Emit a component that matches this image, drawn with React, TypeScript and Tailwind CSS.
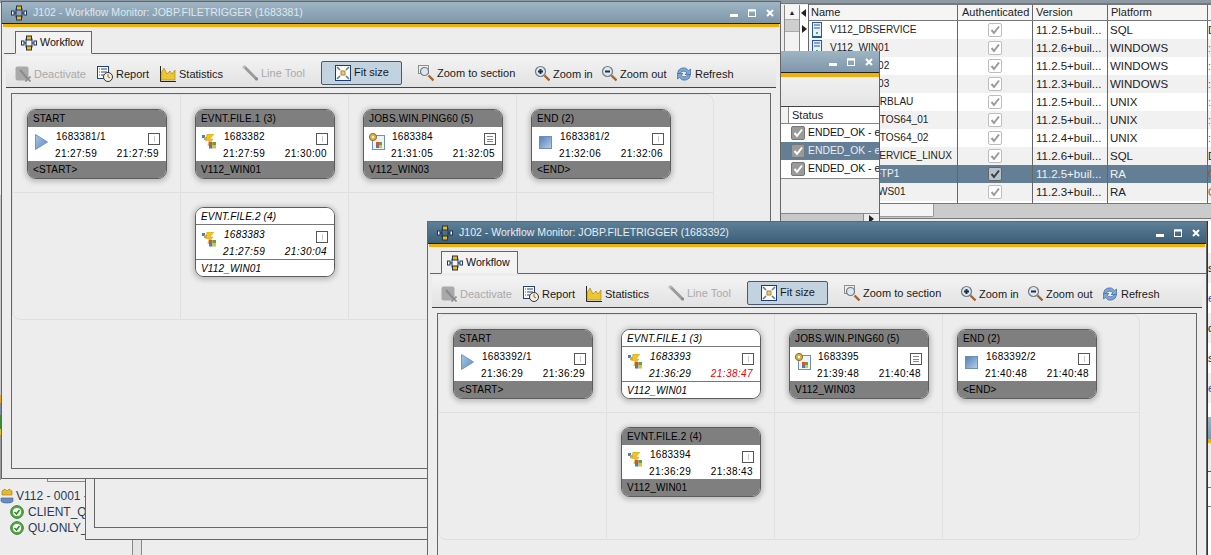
import React from "react";

function WfIcon() {
  return (
    <svg width="16" height="16" viewBox="0 0 16 16" className="shrink-0">
      <rect x="0.5" y="6" width="2.5" height="4" fill="#fff" stroke="#1d3557" />
      <path d="M3 8h2M11 8h2M5 3.5v9M11 3.5v9M5 3.5h1M10 3.5h1M5 12.5h1M10 12.5h1" stroke="#1d3557" fill="none" />
      <rect x="5.5" y="1" width="5" height="4" fill="#f2b705" stroke="#1d3557" />
      <rect x="5.5" y="11" width="5" height="4" fill="#f2b705" stroke="#1d3557" />
      <rect x="13" y="6" width="2.5" height="4" fill="#fff" stroke="#1d3557" />
    </svg>
  );
}

function WinButtons() {
  return (
    <div className="flex items-center gap-[10px]">
      <svg width="8" height="8" viewBox="0 0 8 8"><rect y="5" width="8" height="3" fill="#fff" /></svg>
      <svg width="8" height="8" viewBox="0 0 8 8"><rect x="0.5" y="1" width="7" height="6.5" fill="none" stroke="#fff" /><rect x="0" y="0.5" width="8" height="2" fill="#fff" /></svg>
      <svg width="8" height="8" viewBox="0 0 8 8"><path d="M1 1l6 6M7 1l-6 6" stroke="#fff" strokeWidth="2" /></svg>
    </div>
  );
}

const Mag = ({ sign }: { sign: "+" | "-" | "" }) => (
  <svg width="16" height="17" viewBox="0 0 16 17" className="shrink-0">
    {sign === "" && <rect x="0.5" y="0.5" width="10" height="8" fill="none" stroke="#333" strokeDasharray="1 1" />}
    <circle cx="6.5" cy="6.5" r={sign === "" ? 4 : 5} fill="#dfe7ee" stroke="#6e7b86" strokeWidth="1.2" />
    <path d="M10.5 10.5l5 5" stroke="#a5642a" strokeWidth="2.4" />
    {sign !== "" && <path d="M4 6.5h5" stroke="#1d2f45" strokeWidth="2" />}
    {sign === "+" && <path d="M6.5 4v5" stroke="#1d2f45" strokeWidth="2" />}
  </svg>
);

const IconDeactivate = () => (
  <svg width="16" height="16" viewBox="0 0 16 16" className="shrink-0">
    <rect x="0.5" y="0.5" width="13" height="14" rx="2" fill="#a9a9a9" />
    <path d="M5 4l7 8" stroke="#8a8a8a" strokeWidth="2" />
    <path d="M10.5 10.5l5 5M15.5 10.5l-5 5" stroke="#8c8c8c" strokeWidth="1.6" />
  </svg>
);
const IconReport = () => (
  <svg width="16" height="16" viewBox="0 0 16 16" className="shrink-0">
    <rect x="0.5" y="0.5" width="11" height="12" fill="#fff" stroke="#23407a" />
    <path d="M2 3h1M2 6h1M2 9h1" stroke="#c33" />
    <path d="M4 3h6M4 6h6M4 9h3" stroke="#23407a" />
    <circle cx="11" cy="11" r="4.5" fill="#f4efe0" stroke="#333" />
    <path d="M11 8v3l2 1" stroke="#a5642a" fill="none" />
  </svg>
);
const IconStats = () => (
  <svg width="16" height="16" viewBox="0 0 16 16" className="shrink-0">
    <path d="M0.5 0v15.5H16" fill="none" stroke="#222" />
    <path d="M1 7l3-5 3 6 3-3 2 3 3-4v10H1z" fill="#eec72f" stroke="#8a6c10" strokeWidth="0.5" />
  </svg>
);
const IconLine = () => (
  <svg width="16" height="16" viewBox="0 0 16 16" className="shrink-0">
    <path d="M2 1.5l12.5 12.5" stroke="#9a9a9a" strokeWidth="3" />
    <circle cx="2" cy="2" r="1.6" fill="#bcbcbc" />
    <circle cx="14.5" cy="14" r="1.6" fill="#8a8a8a" />
  </svg>
);
const IconFit = () => (
  <svg width="16" height="16" viewBox="0 0 16 16" className="shrink-0">
    <rect x="0.5" y="0.5" width="15" height="15" fill="#fff" stroke="#1d3a6e" />
    <rect x="6" y="6" width="4" height="4" fill="#e9c77a" stroke="#a8873c" />
    <path d="M2 2l3 3M14 2l-3 3M2 14l3-3M14 14l-3-3" stroke="#5f7a92" strokeWidth="1.6" />
  </svg>
);
const IconRefresh = () => (
  <svg width="16" height="16" viewBox="0 0 16 16" className="shrink-0">
    <path d="M1.5 7.5a6 6 0 0 1 11-3l2-1.5v5.5H9l2-1.5a4 4 0 0 0-7 .5z" fill="#7fa7d3" stroke="#3c6aa0" strokeWidth="0.7" />
    <path d="M14.5 8.5a6 6 0 0 1-11 3L1.5 13V7.5H7L5 9a4 4 0 0 0 7-.5z" fill="#7fa7d3" stroke="#3c6aa0" strokeWidth="0.7" />
  </svg>
);

function Tool({ icon, label, off, className }: { icon: React.ReactNode; label: string; off?: boolean; className: string }) {
  return (
    <div className={`flex items-center gap-[3px] shrink-0 ${className}`}>
      {icon}
      <span className={`text-[11px] leading-[14px] whitespace-nowrap ${off ? "text-[#a9a9a9]" : "text-[#1a1a1a]"}`}>{label}</span>
    </div>
  );
}

function Toolbar() {
  return (
    <div className="h-[32px] ml-[4px] mr-[4px] bg-gradient-to-b from-[#f3f3f3] to-[#e2e2e2] border-b border-[#444] flex items-center pl-[9px] pt-[3px] shrink-0">
      <Tool className="w-[82px] mt-[1px]" icon={<IconDeactivate />} label="Deactivate" off />
      <Tool className="w-[63px] mt-[1px]" icon={<IconReport />} label="Report" />
      <Tool className="w-[82px] mt-[1px]" icon={<IconStats />} label="Statistics" />
      <Tool className="w-[79px]" icon={<IconLine />} label="Line Tool" off />
      <div className="w-[81px] h-[24px] mr-[16px] -mt-[1px] rounded-[2px] border border-[#4a5a68] bg-[#c3d2df] flex items-center pl-[13px] gap-[3px] shrink-0">
        <IconFit />
        <span className="text-[11px] text-[#1a1a1a]">Fit size</span>
      </div>
      <Tool className="w-[116px]" icon={<Mag sign="" />} label="Zoom to section" />
      <Tool className="w-[67px] mt-[1px]" icon={<Mag sign="+" />} label="Zoom in" />
      <Tool className="w-[75px] mt-[1px]" icon={<Mag sign="-" />} label="Zoom out" />
      <Tool className="w-[64px] mt-[1px]" icon={<IconRefresh />} label="Refresh" />
    </div>
  );
}

const IconTrigger = () => (
  <svg width="14" height="15" viewBox="0 0 14 15" className="absolute left-[6px] top-[7px]">
    <path d="M5 0h7L8 5h3l-5 7 1-5.5H3.5z" fill="#f0c419" stroke="#b88d10" strokeWidth="0.4" />
    <rect x="0" y="1" width="3" height="3" fill="#3f7fc4" />
    <rect x="2" y="3" width="3" height="3" fill="#e8a030" />
    <rect x="7" y="8" width="3.5" height="3" fill="#d84f3a" />
    <rect x="10.5" y="8" width="3.5" height="3" fill="#58a83c" />
    <rect x="7" y="11" width="3.5" height="3.5" fill="#3f7fc4" />
    <rect x="10.5" y="11" width="3.5" height="3.5" fill="#e8c020" />
  </svg>
);
const IconJob = () => (
  <svg width="16" height="17" viewBox="0 0 16 17" className="absolute left-[5px] top-[6px]">
    <rect x="3.5" y="2.5" width="12" height="14" fill="#eef3fa" stroke="#6f8fb5" />
    <circle cx="4" cy="4" r="3.6" fill="#d9b04a" stroke="#8d7022" />
    <circle cx="4" cy="4" r="1.2" fill="#fff" />
    <rect x="7" y="9" width="3" height="3" fill="#d84f3a" />
    <rect x="10" y="9" width="3" height="3" fill="#58a83c" />
    <rect x="7" y="12" width="3" height="3" fill="#3f7fc4" />
    <rect x="10" y="12" width="3" height="3" fill="#e8c020" />
  </svg>
);
const IconStart = () => (
  <svg width="13" height="16" viewBox="0 0 13 16" className="absolute left-[7px] top-[7px]">
    <defs><linearGradient id="st" x1="0" y1="0" x2="1" y2="1"><stop offset="0" stopColor="#a9c6e8" /><stop offset="1" stopColor="#5f8cc0" /></linearGradient></defs>
    <path d="M0.5 0.5L12.5 8 0.5 15.5z" fill="url(#st)" stroke="#7395bf" />
  </svg>
);
const IconEnd = () => (
  <svg width="13" height="13" viewBox="0 0 13 13" className="absolute left-[7px] top-[9px]">
    <defs><linearGradient id="en" x1="0" y1="0" x2="1" y2="1"><stop offset="0" stopColor="#4f7fb8" /><stop offset="1" stopColor="#b9cfe8" /></linearGradient></defs>
    <rect x="0.5" y="0.5" width="12" height="12" fill="url(#en)" stroke="#6f8fb5" />
  </svg>
);

function Flag({ lines }: { lines?: boolean }) {
  return (
    <div className="absolute right-[6px] top-[6px] w-[12px] h-[12px] border border-[#555] bg-white flex items-center justify-center">
      {lines ? (
        <div className="w-[6px] h-[6px] flex flex-col justify-between">
          <div className="h-[1px] bg-[#888]" />
          <div className="h-[1px] bg-[#888]" />
          <div className="h-[1px] bg-[#888]" />
        </div>
      ) : (
        <div className="w-[1px] h-[6px] bg-[#ccc]" />
      )}
    </div>
  );
}

type NodeP = { title: string; id: string; t1: string; t2: string; foot: string; icon: React.ReactNode; white?: boolean; lines?: boolean; red?: boolean };

function Node({ title, id, t1, t2, foot, icon, white, lines, red }: NodeP) {
  const bar = white ? "bg-white" : "bg-[#7f7f7f]";
  const txt = `${white ? "italic" : ""} text-[10px] text-black`;
  return (
    <div className="w-[140px] h-[70px] rounded-[9px] border border-[#5c5c5c] overflow-hidden bg-white shadow-[0_1px_5px_2px_rgba(0,0,0,0.2)] flex flex-col">
      <div className={`h-[17px] ${bar} ${white ? "border-b border-[#777]" : ""} pl-[5px] ${txt} leading-[18px] tracking-[0.15px] whitespace-nowrap shrink-0`}>{title}</div>
      <div className={`relative h-[34px] bg-white ${txt} shrink-0`}>
        {icon}
        <div className="absolute left-[28px] top-[4px] leading-[12px] tracking-[0.28px]">{id}</div>
        <div className="absolute left-[27px] top-[21px] leading-[12px] tracking-[0.4px]">{t1}</div>
        <div className={`absolute right-[7px] top-[21px] leading-[12px] tracking-[0.4px] ${red ? "text-[#e8000d]" : ""}`}>{t2}</div>
        <Flag lines={lines} />
      </div>
      <div className={`flex-1 ${bar} ${white ? "border-t border-[#777]" : ""} pl-[5px] ${txt} leading-[18px] tracking-[0.15px] whitespace-nowrap`}>{foot}</div>
    </div>
  );
}

function Grid({ top, second }: { top: NodeP[]; second: NodeP }) {
  return (
    <div className="w-[702px] h-[226px] bg-[#ededed] border border-[#e0e0e0] rounded-[8px] flex flex-col overflow-hidden">
      <div className="flex h-[98px] border-b border-[#e0e0e0] shrink-0">
        {top.map((n, i) => (
          <div key={i} className={`pl-[14px] pt-[14px] ${i < 3 ? "w-[168px] border-r border-[#e0e0e0]" : "flex-1"}`}><Node {...n} /></div>
        ))}
      </div>
      <div className="flex flex-1">
        <div className="w-[168px] border-r border-[#e0e0e0]" />
        <div className="w-[168px] pl-[14px] pt-[14px] border-r border-[#e0e0e0]"><Node {...second} /></div>
        <div className="w-[168px] border-r border-[#e0e0e0]" />
        <div className="flex-1" />
      </div>
    </div>
  );
}

function Win({ place, title, active, top, second }: { place: string; title: string; active?: boolean; top: NodeP[]; second: NodeP }) {
  return (
    <div className={`absolute w-[780px] border border-[#666] bg-[#ededed] flex flex-col ${place}`}>
      <div className={`h-[22px] shrink-0 flex items-center justify-between pl-[9px] pr-[6px] border-b border-[#222] ${active ? "bg-gradient-to-b from-[#5d7f98] to-[#3d5f78]" : "bg-gradient-to-b from-[#9fb5c4] to-[#7e97aa]"}`}>
        <div className="flex items-center gap-[6px]">
          <WfIcon />
          <span className={`text-[10.55px] ${active ? "text-[#e4edf3]" : "text-[#dfe7ee]"}`}>{title}</span>
        </div>
        <WinButtons />
      </div>
      <div className="h-[3px] bg-[#f2ae0b] ml-[1px] mr-[1px] shrink-0" />
      <div className="h-[27px] pl-[11px] flex items-end border-b border-[#666] ml-[2px] shrink-0">
        <div className="h-[23px] w-[77px] -mb-[1px] border border-[#666] border-b-[#ededed] bg-[#f3f3f3] flex items-center gap-[3px] pl-[5px]">
          <WfIcon />
          <span className="text-[10.7px] text-[#111]">Workflow</span>
        </div>
      </div>
      <div className="h-[2px] shrink-0" />
      <Toolbar />
      <div className="flex-1 mx-[9px] mt-[5px] mb-[9px] border border-[#666] overflow-hidden min-h-0">
        <Grid top={top} second={second} />
      </div>
    </div>
  );
}

const rows = [
  ["V112_DBSERVICE", "11.2.5+buil...", "SQL", "D"],
  ["V112_WIN01", "11.2.6+buil...", "WINDOWS", ":"],
  ["V112_WIN02", "11.2.5+buil...", "WINDOWS", ":"],
  ["V112_WIN03", "11.2.3+buil...", "WINDOWS", ":"],
  ["V112_ROTRBLAU", "11.2.5+buil...", "UNIX", ":"],
  ["V112_CENTOS64_01", "11.2.5+buil...", "UNIX", ":"],
  ["V112_CENTOS64_02", "11.2.4+buil...", "UNIX", ":"],
  ["V112_DBSERVICE_LINUX", "11.2.6+buil...", "SQL", "D"],
  ["V112_WSFTP1", "11.2.5+buil...", "RA", "C"],
  ["V112_RA_WS01", "11.2.3+buil...", "RA", "C"],
];

function Check({ sel }: { sel?: boolean }) {
  return (
    <div className={`w-[14px] h-[14px] rounded-[2px] border flex items-center justify-center ${sel ? "bg-[#b8c2cb] border-[#666]" : "bg-white border-[#bdbdbd]"}`}>
      <svg width="10" height="10" viewBox="0 0 10 10"><path d="M1.5 5l2.5 3L9 1.5" fill="none" stroke={sel ? "#33414d" : "#9a9a9a"} strokeWidth="2" /></svg>
    </div>
  );
}

function DarkCheck() {
  return (
    <div className="w-[14px] h-[14px] rounded-[2px] border bg-[#9a9a9a] border-[#777] flex items-center justify-center shrink-0">
      <svg width="10" height="10" viewBox="0 0 10 10"><path d="M1.5 5l2.5 3L9 1.5" fill="none" stroke="#fff" strokeWidth="2" /></svg>
    </div>
  );
}

function AgentTable() {
  return (
    <div className="absolute left-[781px] top-[3px] w-[430px] h-[216px] bg-[#ededed] border-t border-[#777] text-[11px] text-[#222]">
      <div className="absolute left-[3px] top-[1px] w-[16px] h-[70px] border-x border-[#888]">
        <div className="h-[15px] border-b border-[#aaa] text-center text-[7px] leading-[15px] bg-[#f5f5f5]">▲</div>
        <div className="h-[12px] border-b border-[#aaa] bg-[#cfcfcf]" />
        <div className="h-[40px] bg-[#f2f2f2]" />
      </div>
      <div className="absolute left-[19px] top-[1px] w-[8px] h-[200px] bg-white">
        <div className="absolute left-[1px] top-[4px] w-0 h-0 border-y-[4px] border-y-transparent border-r-[5px] border-r-[#222]" />
        <div className="absolute left-[2px] top-[20px] w-0 h-0 border-y-[4px] border-y-transparent border-l-[5px] border-l-[#222]" />
      </div>
      <div className="absolute left-[27px] top-0 w-[403px] border-l border-[#666] overflow-hidden">
        <div className="flex h-[17px] bg-[#f5f5f5] border-y border-[#777] leading-[15px]">
          <div className="w-[149px] shrink-0 pl-[2px] border-r border-[#666]">Name</div>
          <div className="w-[75px] shrink-0 pl-[4px] border-r border-[#666]">Authenticated</div>
          <div className="w-[75px] shrink-0 pl-[3px] border-r border-[#666]">Version</div>
          <div className="w-[100px] shrink-0 pl-[3px] border-r border-[#666]">Platform</div>
        </div>
        {rows.map((r, i) => {
          const sel = i === 8;
          return (
            <div key={i} className={`flex h-[18px] items-center leading-[18px] ${sel ? "bg-[#647e96] text-[#eef3f7]" : i % 2 ? "bg-[#f1f1f1]" : "bg-white"}`}>
              <div className="w-[149px] shrink-0 pl-[3px] border-r border-[#666] h-full flex items-center gap-[8px] whitespace-nowrap overflow-hidden text-[10.1px]">
                <svg width="10" height="16" viewBox="0 0 10 16" className="shrink-0"><rect x="0.5" y="0.5" width="9" height="14" fill="#e8f0fa" stroke="#2d55a5" /><path d="M2 3h6M2 6h6" stroke="#2d55a5" /><rect x="4" y="10" width="2" height="2" fill="#4caf50" /><path d="M0 15.5h10" stroke="#2d55a5" /></svg>
                <span>{r[0]}</span>
              </div>
              <div className="w-[75px] shrink-0 border-r border-[#666] h-full flex items-center justify-center"><Check sel={sel} /></div>
              <div className="w-[75px] shrink-0 pl-[3px] border-r border-[#666] h-full text-[11.5px]">{r[1]}</div>
              <div className="w-[100px] shrink-0 pl-[2px] border-r border-[#666] h-full text-[11.5px]">{r[2]}</div>
              <div className={`w-[4px] overflow-hidden text-[11px] ${i === 0 || i === 7 ? "text-[#222]" : "text-[#c0501c]"}`}>{r[3]}</div>
            </div>
          );
        })}
        <div className="flex h-[2px] bg-white">
          <div className="w-[149px] border-r border-[#666]" />
          <div className="w-[75px] border-r border-[#666]" />
          <div className="w-[75px] border-r border-[#666]" />
          <div className="w-[100px] border-r border-[#666]" />
        </div>
      </div>
      <div className="absolute left-[27px] top-[199px] w-[403px] h-[16px] bg-[#cbcbcb] border-y border-[#777]">
        <div className="ml-[72px] w-[54px] h-[13px] bg-[#f4f4f4] rounded-br-[2px] border-r border-b border-[#999]" />
      </div>
    </div>
  );
}

function StatusDialog() {
  return (
    <div className="absolute left-[775px] top-[51px] w-[105px] h-[170px] border-r border-[#666] bg-[#ededed] flex flex-col">
      <div className="h-[22px] shrink-0 bg-gradient-to-b from-[#9fb5c4] to-[#7e97aa] border-b border-[#222] flex items-center justify-end pr-[6px]">
        <WinButtons />
      </div>
      <div className="h-[4px] shrink-0 bg-[#f2ae0b]" />
      <div className="h-[30px] shrink-0 border-b border-[#444] bg-gradient-to-b from-[#f1f1f1] to-[#e4e4e4]" />
      <div className="flex h-[17px] shrink-0 bg-white border-b border-[#888]">
        <div className="w-[14px] border-r border-[#888] bg-[#f2f2f2]" />
        <div className="pl-[3px] text-[11px] text-[#222] leading-[16px]">Status</div>
      </div>
      {[0, 1, 2].map((i) => (
        <div key={i} className={`h-[18px] shrink-0 flex items-center whitespace-nowrap overflow-hidden pl-[16px] ${i === 1 ? "bg-[#647e96] text-[#e8eef3]" : "bg-white text-[#111]"} text-[10.4px]`}>
          <DarkCheck />
          <span className="ml-[3px]">ENDED_OK - e</span>
        </div>
      ))}
      <div className="h-[1px] shrink-0 bg-[#888]" />
      <div className="flex-1" />
      <div className="h-[8px] shrink-0 bg-[#c8c8c8] border-t border-[#888] flex justify-end">
        <div className="w-[16px] h-full bg-[#ededed] border-l border-[#888] relative">
          <div className="absolute left-[5px] top-[1px] w-0 h-0 border-y-[4px] border-y-transparent border-l-[5px] border-l-[#222]" />
        </div>
      </div>
    </div>
  );
}

function Background() {
  return (
    <>
      <div className="absolute left-0 top-0 w-full h-[3px] bg-[#8d9aa3]" />
      <div className="absolute left-0 top-[195px] w-[1px] h-[285px] flex flex-col">
        <div className="h-[200px] bg-[#c9c9c9]" />
        <div className="h-[8px] bg-[#e8a52a]" />
        <div className="h-[12px] bg-[#7d8da0]" />
        <div className="h-[14px] bg-[#3d8a3d]" />
        <div className="h-[6px] bg-[#e8c020]" />
        <div className="flex-1 bg-[#999]" />
      </div>
      <div className="absolute left-0 top-[488px] text-[12px] leading-[16px] text-[#2a3a55]">
        <div className="flex items-center gap-[2px] h-[16px]">
          <svg width="14" height="16" viewBox="0 0 14 16"><path d="M1 13a6 2 0 0 0 12 0v-3H1z" fill="#6c8cc0" stroke="#3f5a8f" strokeWidth="0.6" /><path d="M2 3l3-2 2 2 2-2 3 2v4H2z" fill="#e8b92c" stroke="#9a7713" strokeWidth="0.6" /></svg>
          <span>V112 - 0001 -</span>
        </div>
        {["CLIENT_QU", "QU.ONLY_1"].map((t) => (
          <div key={t} className="flex items-center gap-[4px] pl-[10px] h-[16px]">
            <svg width="14" height="14" viewBox="0 0 14 14"><circle cx="7" cy="7" r="6.3" fill="#58ad45" stroke="#2f7a2a" /><circle cx="7" cy="7" r="4" fill="#fff" /><path d="M4.5 7l2 2 3-4" stroke="#2f8a2a" strokeWidth="1.6" fill="none" /></svg>
            <span>{t}</span>
          </div>
        ))}
      </div>
      <div className="absolute left-[47px] top-[470px] w-[40px] h-[12px] border-b border-l border-[#888]" />
      <div className="absolute left-[85px] top-[400px] w-[400px] h-[140px] border border-[#666] bg-[#ededed]">
        <div className="absolute left-[8px] right-0 bottom-[11px] h-[80px] border-b border-l border-[#666]" />
      </div>
      <div className="absolute left-[132px] top-[540px] w-[10px] h-[15px] border-x border-[#888] bg-[#e4e4e4]" />
      <div className="absolute left-[1207px] top-[221px] w-[4px] h-[334px] bg-white border-l border-[#333] text-[11px] leading-[30px] overflow-hidden">
        {[["s", "text-[#222]"], ["e", "text-[#1a3ccf]"], ["d", "text-[#222]"], ["s", "text-[#222]"], ["e", "text-[#1a3ccf]"]].map(([c, k], i) => (
          <div key={i} className={`h-[30px] ${i === 0 ? "mt-[32px]" : ""} ${i % 2 ? "bg-white" : "bg-[#efefef]"} ${k}`}>{c}</div>
        ))}
        <div className="mt-[14px] h-[22px] bg-gradient-to-b from-[#9fb5c4] to-[#7e97aa]" />
        <div className="h-[4px] bg-[#f2ae0b]" />
        <div className="h-[29px] bg-[#ededed] border-b border-[#555]" />
        <div className="h-[16px] bg-[#f5f5f5] border-b border-[#777]" />
        <div className="h-[19px] bg-white border-b border-[#777]" />
      </div>
    </>
  );
}

export default function App() {
  const w1: NodeP[] = [
    { title: "START", id: "1683381/1", t1: "21:27:59", t2: "21:27:59", foot: "<START>", icon: <IconStart /> },
    { title: "EVNT.FILE.1 (3)", id: "1683382", t1: "21:27:59", t2: "21:30:00", foot: "V112_WIN01", icon: <IconTrigger /> },
    { title: "JOBS.WIN.PING60 (5)", id: "1683384", t1: "21:31:05", t2: "21:32:05", foot: "V112_WIN03", icon: <IconJob />, lines: true },
    { title: "END (2)", id: "1683381/2", t1: "21:32:06", t2: "21:32:06", foot: "<END>", icon: <IconEnd /> },
  ];
  const w2: NodeP[] = [
    { title: "START", id: "1683392/1", t1: "21:36:29", t2: "21:36:29", foot: "<START>", icon: <IconStart /> },
    { title: "EVNT.FILE.1 (3)", id: "1683393", t1: "21:36:29", t2: "21:38:47", foot: "V112_WIN01", icon: <IconTrigger />, white: true, red: true },
    { title: "JOBS.WIN.PING60 (5)", id: "1683395", t1: "21:39:48", t2: "21:40:48", foot: "V112_WIN03", icon: <IconJob />, lines: true },
    { title: "END (2)", id: "1683392/2", t1: "21:40:48", t2: "21:40:48", foot: "<END>", icon: <IconEnd /> },
  ];
  return (
    <div className="relative w-[1211px] h-[555px] overflow-hidden bg-[#ededed] font-['Liberation_Sans',Arial,sans-serif]">
      <Background />
      <AgentTable />
      <StatusDialog />
      <Win place="left-[1px] top-[1px] h-[478px]" title="J102 - Workflow Monitor: JOBP.FILETRIGGER (1683381)" top={w1}
        second={{ title: "EVNT.FILE.2 (4)", id: "1683383", t1: "21:27:59", t2: "21:30:04", foot: "V112_WIN01", icon: <IconTrigger />, white: true }} />
      <Win active place="left-[427px] top-[221px] h-[400px]" title="J102 - Workflow Monitor: JOBP.FILETRIGGER (1683392)" top={w2}
        second={{ title: "EVNT.FILE.2 (4)", id: "1683394", t1: "21:36:29", t2: "21:38:43", foot: "V112_WIN01", icon: <IconTrigger /> }} />
    </div>
  );
}
